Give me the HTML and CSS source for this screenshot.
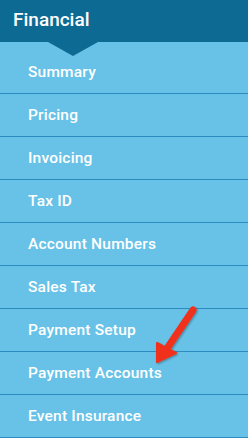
FILE: index.html
```html
<!DOCTYPE html>
<html lang="en">
<head>
    <meta charset="UTF-8">
    <title>Financial</title>
    <link rel="stylesheet" href="styles.css">
</head>
<body>
    <div class="menu">
        <div class="menu-header">Financial</div>
        <div class="menu-list">
            <div class="menu-item first">Summary</div>
            <div class="menu-item">Pricing</div>
            <div class="menu-item">Invoicing</div>
            <div class="menu-item">Tax ID</div>
            <div class="menu-item">Account Numbers</div>
            <div class="menu-item">Sales Tax</div>
            <div class="menu-item">Payment Setup</div>
            <div class="menu-item">Payment Accounts</div>
            <div class="menu-item">Event Insurance</div>
        </div>
        <svg class="pointer" width="248" height="438" viewBox="0 0 248 438">
            <defs>
                <filter id="shadow" x="-50%" y="-50%" width="200%" height="200%">
                    <feDropShadow dx="1" dy="1" stdDeviation="1" flood-color="#000" flood-opacity="0.35"/>
                </filter>
            </defs>
            <g filter="url(#shadow)" fill="#f0301c" stroke="#f0301c" stroke-linecap="round" stroke-linejoin="round">
                <line x1="193" y1="310" x2="166" y2="350" stroke-width="7"/>
                <polygon points="157,362 157,343 176,353" stroke-width="2"/>
            </g>
        </svg>
    </div>
</body>
</html>
```

FILE: styles.css
```css
:root {
    --dark: #0d6a92;
    --light: #68c2e7;
    --line: #2a8cc0;
}

body {
    margin: 0;
    padding: 0;
    font-family: Roboto, "Liberation Sans", sans-serif;
    background-color: var(--light);
}

.menu {
    position: relative;
    width: 248px;
    height: 438px;
    overflow: hidden;
    background-color: var(--light);
}

.menu-header {
    position: relative;
    height: 42px;
    line-height: 40px;
    padding-left: 13px;
    background-color: var(--dark);
    color: white;
    font-size: 19px;
    font-weight: 500;
}

.menu-header::after {
    content: "";
    position: absolute;
    left: 48px;
    top: 42px;
    border-left: 25px solid transparent;
    border-right: 25px solid transparent;
    border-top: 14px solid var(--dark);
}

.menu-item {
    height: 42px;
    line-height: 42px;
    padding-left: 28px;
    border-bottom: 1px solid var(--line);
    color: white;
    font-size: 15.5px;
    font-weight: 500;
    letter-spacing: 0.2px;
}

.menu-item.first {
    height: 51px;
    line-height: 60px;
}

.pointer {
    position: absolute;
    left: 0;
    top: 0;
}
```
